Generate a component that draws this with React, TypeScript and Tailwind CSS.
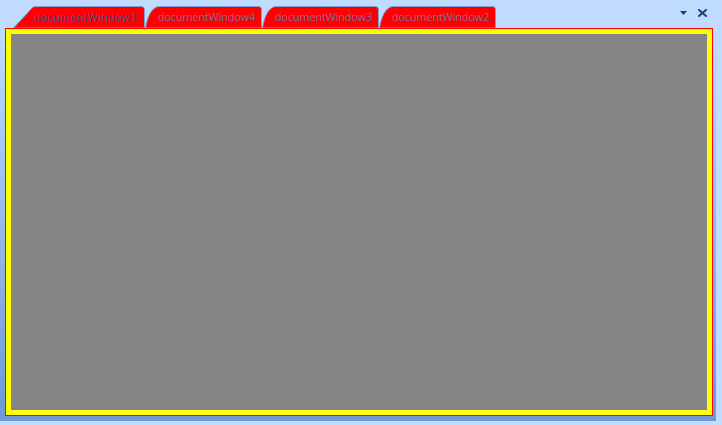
import React from "react";

const tabs = [
  { label: "documentWindow1", selected: true, width: 132 },
  { label: "documentWindow4", selected: false, width: 117 },
  { label: "documentWindow3", selected: false, width: 117 },
  { label: "documentWindow2", selected: false, width: 117 },
];

function TabShape({ width, first }: { width: number; first: boolean }) {
  const w = width - 0.5;
  const d = first
    ? `M0.5,22 L19.5,1.5 Q20.5,0.5 22.5,0.5 L${w - 3},0.5 Q${w},0.5 ${w},3.5 L${w},22 Z`
    : `M0.5,22 C2,12 6,2 13,0.5 L${w - 3},0.5 Q${w},0.5 ${w},3.5 L${w},22 Z`;
  return (
    <svg
      className="absolute inset-0"
      width={width}
      height={22}
      viewBox={`0 0 ${width} 22`}
    >
      <path d={d} fill="#ff0000" stroke="#7f9fd4" strokeWidth={1} />
    </svg>
  );
}

export default function App() {
  return (
    <div
      className="w-[722px] h-[425px] bg-[#bfdbff] flex flex-col overflow-hidden"
      style={{ fontFamily: '"Open Sans", "Noto Sans", sans-serif' }}
    >
      <div className="h-[28px] flex items-end pl-[13px] shrink-0">
        {tabs.map((t, i) => (
          <div
            key={t.label}
            className="relative h-[22px] shrink-0"
            style={{ width: t.width }}
          >
            <TabShape width={t.width} first={i === 0} />
            <span
              className={
                "relative block h-[22px] leading-[22px] text-[11px] whitespace-nowrap " +
                (i === 0
                  ? "pl-[21px] text-[#34589f] tracking-[0.2px]"
                  : "pl-[13px] text-[#74709e] tracking-[-0.2px]")
              }
            >
              {t.label}
            </span>
          </div>
        ))}
        <div className="flex-1" />
        <div className="flex items-center h-[28px] pb-[2px] pr-[15px] gap-[11px]">
          <svg width="7" height="4" viewBox="0 0 7 4">
            <path d="M0,0 L7,0 L3.5,4 Z" fill="#1e3f80" />
          </svg>
          <svg width="9" height="8" viewBox="0 0 9 8">
            <path
              d="M1,1 L8,7 M8,1 L1,7"
              stroke="#1e3f80"
              strokeWidth="2"
              strokeLinecap="square"
            />
          </svg>
        </div>
      </div>
      <div className="w-[716px] h-[393px] bg-gradient-to-b from-[#bfdbff] to-[#6d98d5] pl-[5px] pr-[3px] pb-[5px] flex">
        <div className="flex-1 border border-[#ff0000] flex">
          <div className="flex-1 border-[5px] border-[#ffff00] bg-[#858585]" />
        </div>
      </div>
    </div>
  );
}
